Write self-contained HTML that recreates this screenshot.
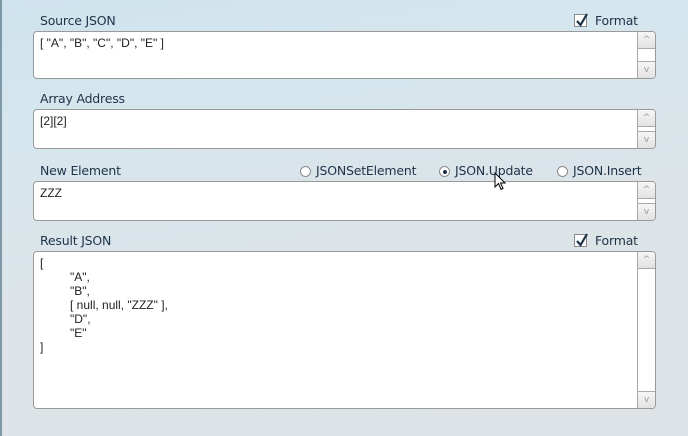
<!DOCTYPE html>
<html><head><meta charset="utf-8"><style>
body{margin:0;width:688px;height:436px;overflow:hidden;position:relative;
background:linear-gradient(170deg,#cfe3ee 0%,#d6e6ee 25%,#dce4e8 55%,#dde3e6 100%);
font-family:"DejaVu Sans",Verdana,sans-serif;}
.edge{position:absolute;left:0;top:0;width:2px;height:436px;background:#7f98a8;}
.lbl{position:absolute;font-size:12.5px;color:#1e3348;letter-spacing:-0.2px}
.box{position:absolute;left:33px;width:623px;background:#fff;border:1px solid #9a9a9a;border-radius:4px;box-sizing:border-box;overflow:hidden}
.txt{position:absolute;left:6px;top:4px;font-family:"Liberation Sans",Arial,sans-serif;font-size:12px;color:#222;white-space:pre;line-height:14px}
.sb{position:absolute;right:0;top:0;bottom:0;width:17px;border-left:1px solid #a8a8a8;background:#fff}
.sb .u,.sb .d{position:absolute;left:0;right:0;height:16px;background:linear-gradient(#f6f6f6,#e2e2e2);color:#999;font-size:9px;text-align:center;line-height:16px}
.sb .u{top:0;border-bottom:1px solid #aaa}
.sb .d{bottom:0;border-top:1px solid #aaa}
.cb{position:absolute;width:13px;height:13px;border:1px solid #8a8a8a;background:#fff;box-sizing:border-box}
.cb svg{position:absolute;left:0;top:-3px}
.rd{position:absolute;width:11px;height:11px;border:1px solid #8a8a8a;border-radius:50%;background:#fff;box-sizing:border-box}
.rd.on::after{content:"";position:absolute;left:2.5px;top:2.5px;width:4px;height:4px;border-radius:50%;background:#1e3348}
</style></head><body>
<div class="edge"></div>

<div class="lbl" style="left:40px;top:13px">Source JSON</div>
<div class="cb" style="left:574px;top:14px"><svg width="14" height="16" viewBox="0 0 14 16"><path d="M2 9 L5.5 13 L12 2" fill="none" stroke="#1e3348" stroke-width="2.2"/></svg></div>
<div class="lbl" style="left:595px;top:13px">Format</div>
<div class="box" style="top:31px;height:48px"><div class="txt">[ "A", "B", "C", "D", "E" ]</div><div class="sb"><div class="u">^</div><div class="d">v</div></div></div>

<div class="lbl" style="left:40px;top:91px">Array Address</div>
<div class="box" style="top:109px;height:40px"><div class="txt">[2][2]</div><div class="sb"><div class="u">^</div><div class="d">v</div></div></div>

<div class="lbl" style="left:40px;top:163px">New Element</div>
<div class="rd" style="left:300px;top:166px"></div>
<div class="lbl" style="left:316px;top:163px">JSONSetElement</div>
<div class="rd on" style="left:439px;top:166px"></div>
<div class="lbl" style="left:455px;top:163px">JSON.Update</div>
<div class="rd" style="left:557px;top:166px"></div>
<div class="lbl" style="left:573px;top:163px">JSON.Insert</div>
<div class="box" style="top:181px;height:40px"><div class="txt">ZZZ</div><div class="sb"><div class="u">^</div><div class="d">v</div></div></div>

<div class="lbl" style="left:40px;top:233px">Result JSON</div>
<div class="cb" style="left:574px;top:234px"><svg width="14" height="16" viewBox="0 0 14 16"><path d="M2 9 L5.5 13 L12 2" fill="none" stroke="#1e3348" stroke-width="2.2"/></svg></div>
<div class="lbl" style="left:595px;top:233px">Format</div>
<div class="box" style="top:251px;height:158px"><div class="txt">[
         "A",
         "B",
         [ null, null, "ZZZ" ],
         "D",
         "E"
]</div><div class="sb"><div class="u">^</div><div class="d">v</div></div></div>

<svg style="position:absolute;left:494px;top:172px" width="14" height="20" viewBox="0 0 14 20"><path d="M1 1 L1 15 L4.5 11.5 L7 17.5 L9 16.5 L6.5 11 L11 11 Z" fill="#fff" stroke="#000" stroke-width="1"/></svg>
</body></html>
